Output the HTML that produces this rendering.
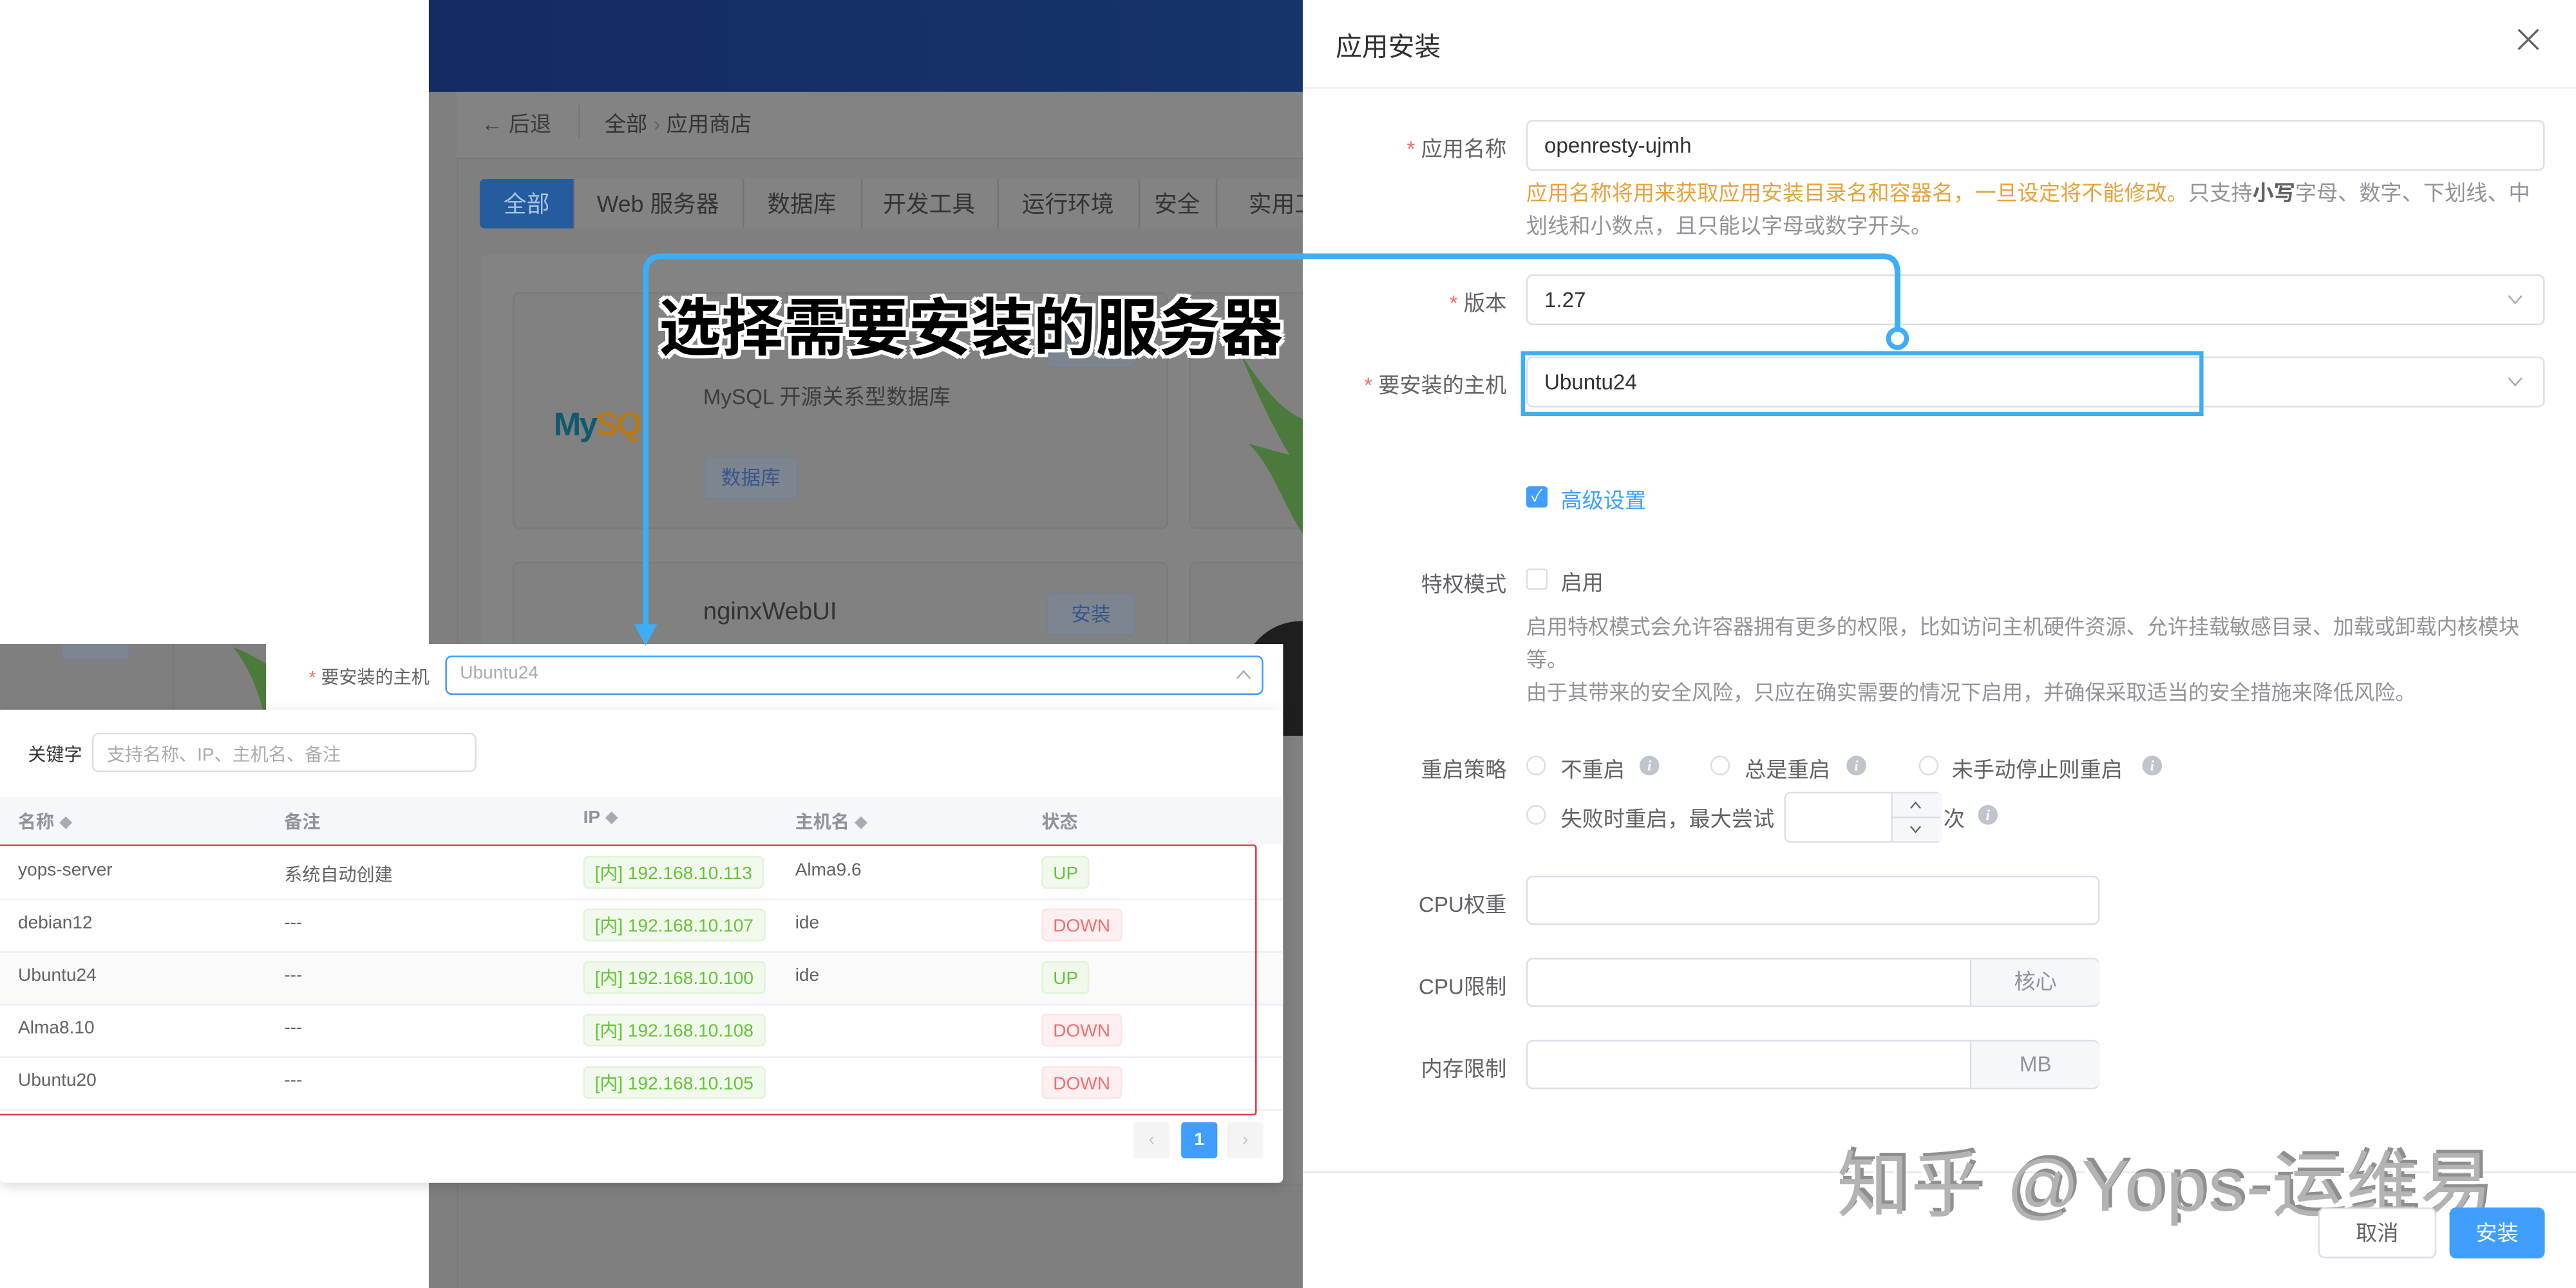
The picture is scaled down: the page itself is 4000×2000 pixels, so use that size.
<!DOCTYPE html>
<html><head><meta charset="utf-8">
<style>
html,body{margin:0;padding:0;width:4000px;height:2000px;overflow:hidden;background:#fff}
#s{position:absolute;left:0;top:0;width:1568px;height:784px;transform:scale(2.55102);transform-origin:0 0;font-family:"Liberation Sans","Noto Sans CJK SC",sans-serif;color:#606266;font-size:13px}
.a{position:absolute;white-space:nowrap}
.inp{position:absolute;border:1px solid #dcdfe6;border-radius:4px;background:#fff;box-sizing:border-box}
.lbl{position:absolute;width:200px;text-align:right;font-size:13px;color:#606266;white-space:nowrap}
.req:before{content:"* ";color:#f56c6c}
.tag{position:absolute;height:20px;line-height:20px;padding:0 6px;border-radius:3px;font-size:11px;box-sizing:border-box}
.ip{background:#f0f9eb;border:1px solid #e1f3d8;color:#67c23a}
.up{background:#f0f9eb;border:1px solid #e1f3d8;color:#67c23a}
.dn{background:#fef0f0;border:1px solid #fde2e2;color:#f56c6c}
.radio{position:absolute;width:12px;height:12px;border:1px solid #dcdfe6;border-radius:50%;box-sizing:border-box;background:#fff}
.info{position:absolute;width:12px;height:12px;border-radius:50%;background:#c0c4cc;color:#fff;font-size:9px;font-style:italic;font-weight:bold;text-align:center;line-height:12px;font-family:"Liberation Serif",serif}
.tab{position:absolute;top:109px;height:30px;line-height:30px;text-align:center;color:#333;font-size:14px;border-right:1px solid #747474;overflow:hidden;white-space:nowrap}
</style></head><body><div id="s">
<div class="a" style="left:261px;top:0;width:532px;height:784px;background:#7f7f7f"></div>
<div class="a" style="left:278px;top:56px;width:1px;height:728px;background:#787878"></div>
<div class="a" style="left:261px;top:0;width:532px;height:56px;background:linear-gradient(90deg,#132c62,#163468)"></div>
<div class="a" style="left:278px;top:56px;width:515px;height:40px;background:#838383;border-bottom:1px solid #777"></div>
<div class="a" style="left:293px;top:65px;color:#3a3a3a;font-size:13px">← 后退</div>
<div class="a" style="left:352px;top:64px;width:1px;height:20px;background:#777"></div>
<div class="a" style="left:368px;top:65px;color:#333;font-size:13px">全部 <span style="color:#666">›</span> 应用商店</div>
<div class="a" style="left:292px;top:109px;width:501px;height:30px;background:#838383;border-radius:3px 0 0 3px"></div>
<div class="tab" style="left:292px;width:57px;background:#245c9e;color:#a9c4e4;border-radius:3px 0 0 3px">全部</div>
<div class="tab" style="left:349px;width:103px">Web 服务器</div>
<div class="tab" style="left:452px;width:72px">数据库</div>
<div class="tab" style="left:524px;width:83px">开发工具</div>
<div class="tab" style="left:607px;width:86px">运行环境</div>
<div class="tab" style="left:693px;width:47px">安全</div>
<div class="tab" style="left:740px;width:53px;border:none;text-align:left;padding-left:20px;box-sizing:border-box">实用工具</div>
<div class="a" style="left:293px;top:155px;width:500px;height:565px;background:#838383;border-radius:4px"></div>
<div class="a" style="left:312px;top:178px;width:397px;height:142px;background:#818181;border:1px solid #7a7a7a;border-radius:4px"></div>
<div class="a" style="left:724px;top:178px;width:69px;height:142px;background:#818181;border:1px solid #7a7a7a;border-radius:4px 0 0 4px"></div>
<div class="a" style="left:312px;top:342px;width:397px;height:378px;background:#818181;border:1px solid #7a7a7a;border-radius:4px"></div>
<div class="a" style="left:724px;top:342px;width:69px;height:378px;background:#818181;border:1px solid #7a7a7a;border-radius:4px 0 0 4px"></div>
<div class="a" style="left:337px;top:248px;font-size:20px;font-weight:bold;color:#0f5a6e;letter-spacing:-1px">My<span style="color:#b47a1a">SQ</span></div>
<div class="a" style="left:428px;top:231px;color:#3c3c3c;font-size:13px">MySQL 开源关系型数据库</div>
<div class="a" style="left:428px;top:278px;width:56px;height:24px;line-height:24px;text-align:center;background:#7d8590;border:1px solid #778090;border-radius:3px;color:#36558a;font-size:12px">数据库</div>
<div class="a" style="left:637px;top:198px;width:52px;height:24px;border:1px solid #778090;border-radius:3px;background:#7d8590"></div>
<div class="a" style="left:428px;top:364px;color:#333;font-size:15px">nginxWebUI</div>
<div class="a" style="left:637px;top:361px;width:52px;height:24px;line-height:24px;text-align:center;border:1px solid #778090;border-radius:3px;background:#7d8590;color:#36558a;font-size:12px">安装</div>
<svg class="a" style="left:740px;top:215px" width="53" height="110"><path d="M15 0 C28 20 40 35 53 40 L53 110 C40 90 35 70 20 55 C30 58 38 60 45 62 C35 45 25 25 15 0Z" fill="#4b7a3c"/></svg>
<svg class="a" style="left:752px;top:378px" width="41" height="70"><path d="M41 0 C20 0 5 15 0 40 L0 70 L41 70Z" fill="#1e1e1e"/></svg>
<div class="a" style="left:0;top:0;width:261px;height:392px;background:#fff"></div>
<div class="a" style="left:0;top:720px;width:261px;height:64px;background:#fff"></div>
<div class="a" style="left:0;top:392px;width:162px;height:40px;background:#7f7f7f"></div>
<div class="a" style="left:37px;top:392px;width:40px;height:9px;border:1px solid #778090;border-top:none;border-radius:0 0 3px 3px;background:#7d8590"></div>
<div class="a" style="left:105px;top:392px;width:1px;height:40px;background:#777"></div>
<svg class="a" style="left:130px;top:392px" width="32" height="40"><path d="M32 12 C25 8 18 4 12 2 C20 12 26 25 30 40 L32 40Z" fill="#4b7a3c"/></svg>
<div class="a" style="left:162px;top:392px;width:619px;height:42px;background:#fff"></div>
<div class="a" style="left:188px;top:404px;font-size:11px;color:#606266"><span style="color:#f56c6c">* </span>要安装的主机</div>
<div class="inp" style="left:271px;top:399px;width:498px;height:24px;border-color:#409eff"></div>
<div class="a" style="left:280px;top:404px;font-size:11px;color:#a8abb2">Ubuntu24</div>
<svg class="a" style="left:752px;top:407px" width="10" height="7"><path d="M1 6 L5 1.5 L9 6" fill="none" stroke="#a8abb2" stroke-width="1"/></svg>
<div class="a" style="left:0;top:432px;width:781px;height:288px;background:#fff;box-shadow:0 2px 8px rgba(0,0,0,.15);border-radius:3px"></div>
<div class="a" style="left:17px;top:451px;font-size:11px;color:#333">关键字</div>
<div class="inp" style="left:56px;top:446px;width:234px;height:24px"></div>
<div class="a" style="left:65px;top:451px;font-size:11px;color:#a8abb2">支持名称、IP、主机名、备注</div>
<div class="a" style="left:0;top:485px;width:781px;height:29px;background:#f5f7fa"></div>
<div class="a" style="left:11px;top:492px;font-size:11px;font-weight:bold;color:#909399">名称 <span style="font-size:8px;color:#a8abb2">◆</span></div>
<div class="a" style="left:173px;top:492px;font-size:11px;font-weight:bold;color:#909399">备注</div>
<div class="a" style="left:355px;top:492px;font-size:11px;font-weight:bold;color:#909399">IP <span style="font-size:8px;color:#a8abb2">◆</span></div>
<div class="a" style="left:484px;top:492px;font-size:11px;font-weight:bold;color:#909399">主机名 <span style="font-size:8px;color:#a8abb2">◆</span></div>
<div class="a" style="left:634px;top:492px;font-size:11px;font-weight:bold;color:#909399">状态</div>
<div class="a" style="left:0;top:579px;width:781px;height:32px;background:#fafafa"></div>
<div class="a" style="left:0;top:547px;width:781px;height:1px;background:#ebeef5"></div>
<div class="a" style="left:0;top:579px;width:781px;height:1px;background:#ebeef5"></div>
<div class="a" style="left:0;top:611px;width:781px;height:1px;background:#ebeef5"></div>
<div class="a" style="left:0;top:643px;width:781px;height:1px;background:#ebeef5"></div>
<div class="a" style="left:0;top:675px;width:781px;height:1px;background:#ebeef5"></div>
<div class="a" style="left:11px;top:524px;font-size:11px">yops-server</div>
<div class="a" style="left:173px;top:524px;font-size:11px">系统自动创建</div>
<div class="tag ip" style="left:355px;top:521px">[内] 192.168.10.113</div>
<div class="a" style="left:484px;top:524px;font-size:11px">Alma9.6</div>
<div class="tag up" style="left:634px;top:521px">UP</div>
<div class="a" style="left:11px;top:556px;font-size:11px">debian12</div>
<div class="a" style="left:173px;top:556px;font-size:11px">---</div>
<div class="tag ip" style="left:355px;top:553px">[内] 192.168.10.107</div>
<div class="a" style="left:484px;top:556px;font-size:11px">ide</div>
<div class="tag dn" style="left:634px;top:553px">DOWN</div>
<div class="a" style="left:11px;top:588px;font-size:11px">Ubuntu24</div>
<div class="a" style="left:173px;top:588px;font-size:11px">---</div>
<div class="tag ip" style="left:355px;top:585px">[内] 192.168.10.100</div>
<div class="a" style="left:484px;top:588px;font-size:11px">ide</div>
<div class="tag up" style="left:634px;top:585px">UP</div>
<div class="a" style="left:11px;top:620px;font-size:11px">Alma8.10</div>
<div class="a" style="left:173px;top:620px;font-size:11px">---</div>
<div class="tag ip" style="left:355px;top:617px">[内] 192.168.10.108</div>
<div class="tag dn" style="left:634px;top:617px">DOWN</div>
<div class="a" style="left:11px;top:652px;font-size:11px">Ubuntu20</div>
<div class="a" style="left:173px;top:652px;font-size:11px">---</div>
<div class="tag ip" style="left:355px;top:649px">[内] 192.168.10.105</div>
<div class="tag dn" style="left:634px;top:649px">DOWN</div>
<div class="a" style="left:0;top:514px;width:765px;height:165px;border:1.5px solid #e8353f;border-left:none;box-sizing:border-box;border-radius:0 2px 2px 0"></div>
<div class="a" style="left:690px;top:683px;width:22px;height:22px;background:#f4f4f5;border-radius:2px;text-align:center;line-height:22px;color:#c0c4cc;font-size:11px">‹</div>
<div class="a" style="left:719px;top:683px;width:22px;height:22px;background:#409eff;border-radius:2px;text-align:center;line-height:22px;color:#fff;font-size:11px;font-weight:bold">1</div>
<div class="a" style="left:747px;top:683px;width:22px;height:22px;background:#f4f4f5;border-radius:2px;text-align:center;line-height:22px;color:#c0c4cc;font-size:11px">›</div>
<div class="a" style="left:793px;top:0;width:775px;height:784px;background:#fff"></div>
<div class="a" style="left:813px;top:15px;font-size:16px;color:#303133">应用安装</div>
<svg class="a" style="left:1532px;top:17px" width="14" height="14"><path d="M1 1 L13 13 M13 1 L1 13" stroke="#606266" stroke-width="1.3"/></svg>
<div class="a" style="left:793px;top:53px;width:775px;height:1px;background:#ebeef5"></div>
<div class="lbl req" style="left:717px;top:80px">应用名称</div>
<div class="inp" style="left:929px;top:73px;width:620px;height:31px"></div>
<div class="a" style="left:940px;top:81px;font-size:13px;color:#303133">openresty-ujmh</div>
<div class="a" style="left:929px;top:108px;font-size:13px;line-height:20px;color:#909399;white-space:normal;width:622px"><span style="color:#e6a23c">应用名称将用来获取应用安装目录名和容器名，一旦设定将不能修改。</span>只支持<b style="color:#606266">小写</b>字母、数字、下划线、中划线和小数点，且只能以字母或数字开头。</div>
<div class="lbl req" style="left:717px;top:174px">版本</div>
<div class="inp" style="left:929px;top:167px;width:620px;height:31px"></div>
<div class="a" style="left:940px;top:175px;font-size:13px;color:#303133">1.27</div>
<svg class="a" style="left:1526px;top:179px" width="10" height="7"><path d="M1 1 L5 5.5 L9 1" fill="none" stroke="#a8abb2" stroke-width="1"/></svg>
<div class="lbl req" style="left:717px;top:224px">要安装的主机</div>
<div class="inp" style="left:929px;top:217px;width:620px;height:31px"></div>
<div class="a" style="left:940px;top:225px;font-size:13px;color:#303133">Ubuntu24</div>
<svg class="a" style="left:1526px;top:229px" width="10" height="7"><path d="M1 1 L5 5.5 L9 1" fill="none" stroke="#a8abb2" stroke-width="1"/></svg>
<div class="a" style="left:929px;top:296px;width:13px;height:13px;background:#409eff;border-radius:2px;color:#fff;font-size:10px;text-align:center;line-height:13px">✓</div>
<div class="a" style="left:950px;top:294px;font-size:13px;color:#409eff">高级设置</div>
<div class="lbl" style="left:717px;top:345px">特权模式</div>
<div class="a" style="left:929px;top:346px;width:13px;height:13px;border:1px solid #dcdfe6;border-radius:2px;box-sizing:border-box"></div>
<div class="a" style="left:950px;top:344px;font-size:13px;color:#606266">启用</div>
<div class="a" style="left:929px;top:372px;font-size:12.6px;line-height:20px;color:#909399;white-space:normal;width:622px">启用特权模式会允许容器拥有更多的权限，比如访问主机硬件资源、允许挂载敏感目录、加载或卸载内核模块等。<br>由于其带来的安全风险，只应在确实需要的情况下启用，并确保采取适当的安全措施来降低风险。</div>
<div class="lbl" style="left:717px;top:458px">重启策略</div>
<div class="radio" style="left:929px;top:460px"></div><div class="a" style="left:950px;top:458px">不重启</div><div class="info" style="left:998px;top:460px">i</div>
<div class="radio" style="left:1041px;top:460px"></div><div class="a" style="left:1062px;top:458px">总是重启</div><div class="info" style="left:1124px;top:460px">i</div>
<div class="radio" style="left:1168px;top:460px"></div><div class="a" style="left:1188px;top:458px">未手动停止则重启</div><div class="info" style="left:1304px;top:460px">i</div>
<div class="radio" style="left:929px;top:490px"></div><div class="a" style="left:950px;top:488px">失败时重启，最大尝试</div>
<div class="inp" style="left:1086px;top:482px;width:96px;height:31px"></div>
<div class="a" style="left:1151px;top:483px;width:30px;height:29px;background:#f5f7fa;border-left:1px solid #dcdfe6"></div>
<div class="a" style="left:1151px;top:497px;width:30px;height:1px;background:#dcdfe6"></div>
<svg class="a" style="left:1162px;top:487px" width="8" height="6"><path d="M1 5 L4 1.5 L7 5" fill="none" stroke="#606266" stroke-width="0.9"/></svg>
<svg class="a" style="left:1162px;top:502px" width="8" height="6"><path d="M1 1 L4 4.5 L7 1" fill="none" stroke="#606266" stroke-width="0.9"/></svg>
<div class="a" style="left:1183px;top:488px">次</div><div class="info" style="left:1204px;top:490px">i</div>
<div class="lbl" style="left:717px;top:540px">CPU权重</div>
<div class="inp" style="left:929px;top:533px;width:349px;height:30px"></div>
<div class="lbl" style="left:717px;top:590px">CPU限制</div>
<div class="inp" style="left:929px;top:583px;width:349px;height:30px"></div>
<div class="a" style="left:1199px;top:584px;width:78px;height:28px;background:#f5f7fa;border-left:1px solid #dcdfe6;text-align:center;line-height:28px;color:#909399;border-radius:0 4px 4px 0">核心</div>
<div class="lbl" style="left:717px;top:640px">内存限制</div>
<div class="inp" style="left:929px;top:633px;width:349px;height:30px"></div>
<div class="a" style="left:1199px;top:634px;width:78px;height:28px;background:#f5f7fa;border-left:1px solid #dcdfe6;text-align:center;line-height:28px;color:#909399;border-radius:0 4px 4px 0">MB</div>
<div class="a" style="left:793px;top:713px;width:775px;height:1px;background:#e4e7ed"></div>
<div class="a" style="left:1118px;top:686px;font-size:44px;color:#b3b3b3;text-shadow:-2px 2px 0 #fff,2px -2px 0 #8f8f8f;letter-spacing:1px">知乎 @Yops-运维易</div>
<div class="a" style="left:1411px;top:735px;width:72px;height:31px;border:1px solid #dcdfe6;border-radius:4px;box-sizing:border-box;text-align:center;line-height:29px;color:#606266;background:#fff">取消</div>
<div class="a" style="left:1491px;top:735px;width:58px;height:31px;background:#409eff;border-radius:4px;text-align:center;line-height:31px;color:#fff">安装</div>
<svg class="a" style="left:0;top:0" width="1568" height="784">
<path d="M393 385 L393 166 Q393 156 403 156 L1146 156 Q1155 156 1155 166 L1155 200" fill="none" stroke="#3daef5" stroke-width="3.5"/>
<circle cx="1155" cy="206" r="5.5" fill="#fff" stroke="#3daef5" stroke-width="3"/>
<path d="M386 380 L393 393 L400 380 Z" fill="#3daef5"/>
<rect x="927" y="215" width="413" height="37" fill="none" stroke="#3daef5" stroke-width="2.5"/>
</svg>
<div class="a" style="left:401px;top:169px;font-size:38px;font-weight:bold;color:#000;font-family:'Noto Sans CJK SC',sans-serif;text-shadow:2px 0 0 #fff,-2px 0 0 #fff,0 2px 0 #fff,0 -2px 0 #fff,2px 2px 0 #fff,-2px -2px 0 #fff,2px -2px 0 #fff,-2px 2px 0 #fff">选择需要安装的服务器</div>
</div></body></html>
